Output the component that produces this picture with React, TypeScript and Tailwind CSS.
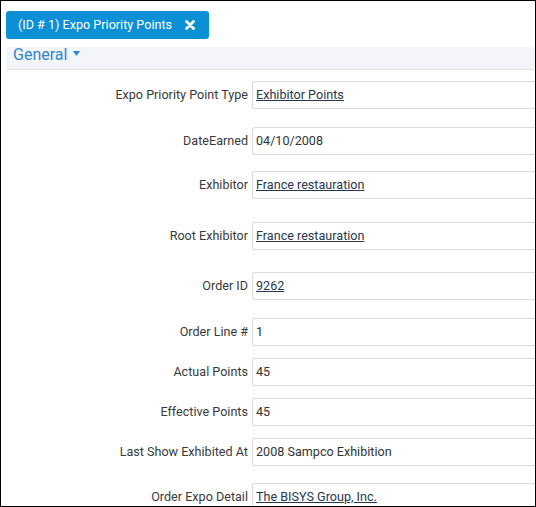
import React from 'react'

interface Field {
  label: string
  value: string
  link?: boolean
  gap: string
}

const fields: Field[] = [
  { label: 'Expo Priority Point Type', value: 'Exhibitor Points', link: true, gap: 'mt-[11px]' },
  { label: 'DateEarned', value: '04/10/2008', gap: 'mt-[18px]' },
  { label: 'Exhibitor', value: 'France restauration', link: true, gap: 'mt-[16px]' },
  { label: 'Root Exhibitor', value: 'France restauration', link: true, gap: 'mt-[23px]' },
  { label: 'Order ID', value: '9262', link: true, gap: 'mt-[22px]' },
  { label: 'Order Line #', value: '1', gap: 'mt-[18px]' },
  { label: 'Actual Points', value: '45', gap: 'mt-[12px]' },
  { label: 'Effective Points', value: '45', gap: 'mt-[12px]' },
  { label: 'Last Show Exhibited At', value: '2008 Sampco Exhibition', gap: 'mt-[12px]' },
  { label: 'Order Expo Detail', value: 'The BISYS Group, Inc.', link: true, gap: 'mt-[17px]' },
]

export default function App() {
  return (
    <div className="w-[536px] h-[507px] overflow-hidden border border-black bg-white font-['Roboto',sans-serif] text-[12.6px] text-[#333]">
      {/* tab */}
      <div className="pl-[5px] pt-[10px]">
        <div className="inline-flex items-center h-[28px] w-[203px] rounded-[3px] bg-[#0b8fd5] text-white pl-[12px]">
          <span className="whitespace-nowrap">(ID # 1) Expo Priority Points</span>
          <svg className="ml-[13px]" width="10" height="10" viewBox="0 0 10 10">
            <path d="M1.5 1.5 L8.5 8.5 M8.5 1.5 L1.5 8.5" stroke="white" strokeWidth="2.8" strokeLinecap="round" />
          </svg>
        </div>
      </div>

      {/* section header */}
      <div className="ml-[5px] mt-[8px] h-[23px] bg-[#f4f5f8] border-b border-[#e3e5e9] flex items-start">
        <span className="ml-[7px] -mt-[3px] text-[16px] leading-[22px] text-[#2f87d3]">General</span>
        <svg className="ml-[6px] mt-[4px]" width="7" height="5" viewBox="0 0 7 5">
          <path d="M0 0 H7 L3.5 5 Z" fill="#2f87d3" />
        </svg>
      </div>

      {/* fields */}
      {fields.map((f) => (
        <div key={f.label} className={`flex items-center ${f.gap}`}>
          <div className="w-[247px] shrink-0 text-right whitespace-nowrap text-[#3a3a3a]">{f.label}</div>
          <div className="ml-[4px] h-[28px] flex-1 flex items-center pl-[3px] border border-r-0 border-[#dcdcdc] rounded-l-[3px] whitespace-nowrap">
            {f.link ? (
              <span className="underline text-[#27374d]">{f.value}</span>
            ) : (
              <span className="text-[#333]">{f.value}</span>
            )}
          </div>
        </div>
      ))}
    </div>
  )
}
